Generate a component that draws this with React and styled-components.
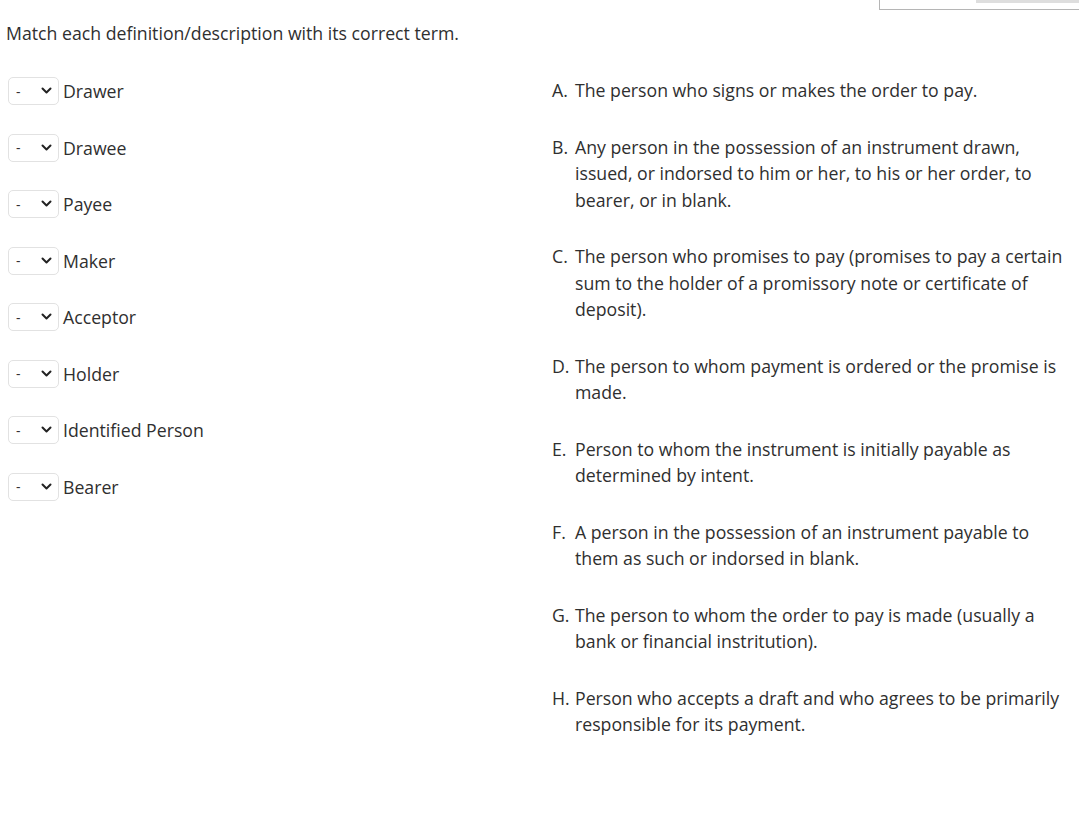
import React from "react";
import styled, { createGlobalStyle } from "styled-components";

const Global = createGlobalStyle`
  html, body { margin: 0; padding: 0; background: #fff; }
  body { font-family: "Open Sans", "Noto Sans", sans-serif; color: #333; }
`;

const Page = styled.div`
  width: 1079px;
  min-height: 816px;
  display: flex;
  flex-direction: column;
`;

const TopBar = styled.div`
  height: 10px;
  display: flex;
  justify-content: flex-end;
`;

const TopBox = styled.div`
  width: 199px;
  height: 9px;
  border-left: 1px solid #b5b5b5;
  border-bottom: 1px solid #b5b5b5;
  display: flex;
  justify-content: flex-end;
  align-items: flex-start;
`;

const TopFill = styled.div`
  width: 103px;
  height: 3px;
  background: #dedede;
`;

const Heading = styled.div`
  margin: 11px 0 0 6px;
  font-size: 17.7px;
  line-height: 24px;
  color: #2f2f2f;
`;

const Grid = styled.div`
  margin-top: 32px;
  display: grid;
  grid-template-columns: 544px 1fr;
  padding-left: 8px;
  padding-right: 8px;
`;

const TermList = styled.div`
  display: flex;
  flex-direction: column;
  gap: 28.5px;
`;

const TermRow = styled.div`
  display: flex;
  align-items: center;
  height: 28px;
  gap: 4px;
`;

const SelectWrap = styled.div`
  position: relative;
  width: 51px;
  height: 28px;
`;

const Select = styled.select`
  appearance: none;
  -webkit-appearance: none;
  width: 51px;
  height: 28px;
  box-sizing: border-box;
  border: 1px solid #e2e2e2;
  border-radius: 5px;
  background: #fff;
  padding: 0 0 0 7px;
  font-family: "Open Sans", sans-serif;
  font-size: 14px;
  color: #333;
`;

const Chevron = styled.svg`
  position: absolute;
  left: 33px;
  top: 9px;
  pointer-events: none;
`;

const TermLabel = styled.span`
  font-size: 17.7px;
  line-height: 24px;
  color: #2f2f2f;
`;

const DefList = styled.div`
  display: flex;
  flex-direction: column;
  gap: 30px;
`;

const DefItem = styled.div`
  display: flex;
  font-size: 17.7px;
  line-height: 26.5px;
  color: #2f2f2f;
`;

const Letter = styled.span`
  flex: 0 0 23px;
  white-space: nowrap;
`;

const DefText = styled.span`
  flex: 1;
`;

const terms = [
  "Drawer",
  "Drawee",
  "Payee",
  "Maker",
  "Acceptor",
  "Holder",
  "Identified Person",
  "Bearer",
];

const defs = [
  ["A.", "The person who signs or makes the order to pay."],
  ["B.", "Any person in the possession of an instrument drawn, issued, or indorsed to him or her, to his or her order, to bearer, or in blank."],
  ["C.", "The person who promises to pay (promises to pay a certain sum to the holder of a promissory note or certificate of deposit)."],
  ["D.", "The person to whom payment is ordered or the promise is made."],
  ["E.", "Person to whom the instrument is initially payable as determined by intent."],
  ["F.", "A person in the possession of an instrument payable to them as such or indorsed in blank."],
  ["G.", "The person to whom the order to pay is made (usually a bank or financial instritution)."],
  ["H.", "Person who accepts a draft and who agrees to be primarily responsible for its payment."],
];

export default function App() {
  return (
    <Page>
      <Global />
      <TopBar>
        <TopBox>
          <TopFill />
        </TopBox>
      </TopBar>
      <Heading>Match each definition/description with its correct term.</Heading>
      <Grid>
        <TermList>
          {terms.map((t) => (
            <TermRow key={t}>
              <SelectWrap>
                <Select defaultValue="-">
                  <option value="-">-</option>
                  {defs.map(([l]) => (
                    <option key={l} value={l[0]}>{l[0]}</option>
                  ))}
                </Select>
                <Chevron width="11" height="9" viewBox="0 0 11 9">
                  <path d="M1.5 2.5 L5.5 6.5 L9.5 2.5" fill="none" stroke="#222" strokeWidth="2" strokeLinecap="round" strokeLinejoin="round" />
                </Chevron>
              </SelectWrap>
              <TermLabel>{t}</TermLabel>
            </TermRow>
          ))}
        </TermList>
        <DefList>
          {defs.map(([l, d]) => (
            <DefItem key={l}>
              <Letter>{l}</Letter>
              <DefText>{d}</DefText>
            </DefItem>
          ))}
        </DefList>
      </Grid>
    </Page>
  );
}
